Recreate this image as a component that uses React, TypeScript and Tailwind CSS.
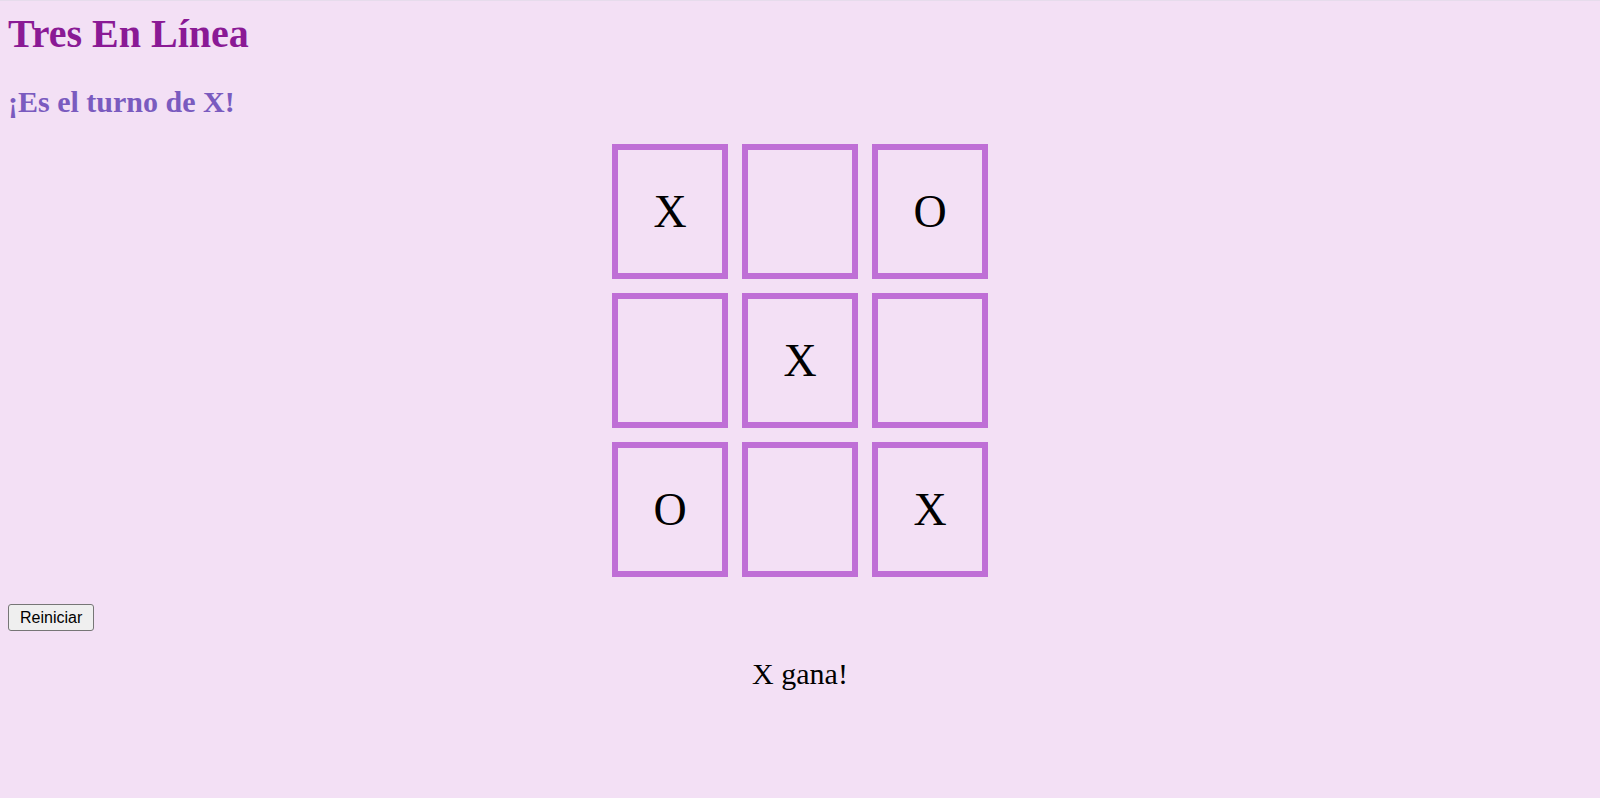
import React from "react";

const board: string[] = ["X", "", "O", "", "X", "", "O", "", "X"];

export default function App() {
  return (
    <div
      className="min-h-[798px] w-full bg-[#f3e0f5] border-t border-[#e6dcec] px-2"
      style={{ fontFamily: '"Liberation Serif", "Times New Roman", serif' }}
    >
      <h1 className="m-0 pt-[13px] text-[40px] font-bold leading-[40px] text-[#8a1a95]">
        Tres En Línea
      </h1>
      <h2 className="m-0 mt-[32px] text-[30px] font-bold leading-[32px] text-[#7a5bbf]">
        ¡Es el turno de X!
      </h2>
      <div className="mt-[26px] flex justify-center">
        <div className="grid grid-cols-[repeat(3,116px)] gap-x-[14px] gap-y-[14px]">
          {board.map((v, i) => (
            <div
              key={i}
              className="flex h-[135px] w-[116px] items-center justify-center border-[6px] border-[#bf6fd6] text-[46px] leading-none text-black"
            >
              {v}
            </div>
          ))}
        </div>
      </div>
      <div className="mt-[27px]">
        <button
          className="h-[27px] rounded-[3px] border border-[#767676] bg-[#efefef] px-[11px] text-[16px] leading-[18px] text-black"
          style={{ fontFamily: '"Liberation Sans", Arial, sans-serif' }}
        >
          Reiniciar
        </button>
      </div>
      <p className="m-0 mt-[26px] text-center text-[30px] leading-[34px] text-black">
        X gana!
      </p>
    </div>
  );
}
